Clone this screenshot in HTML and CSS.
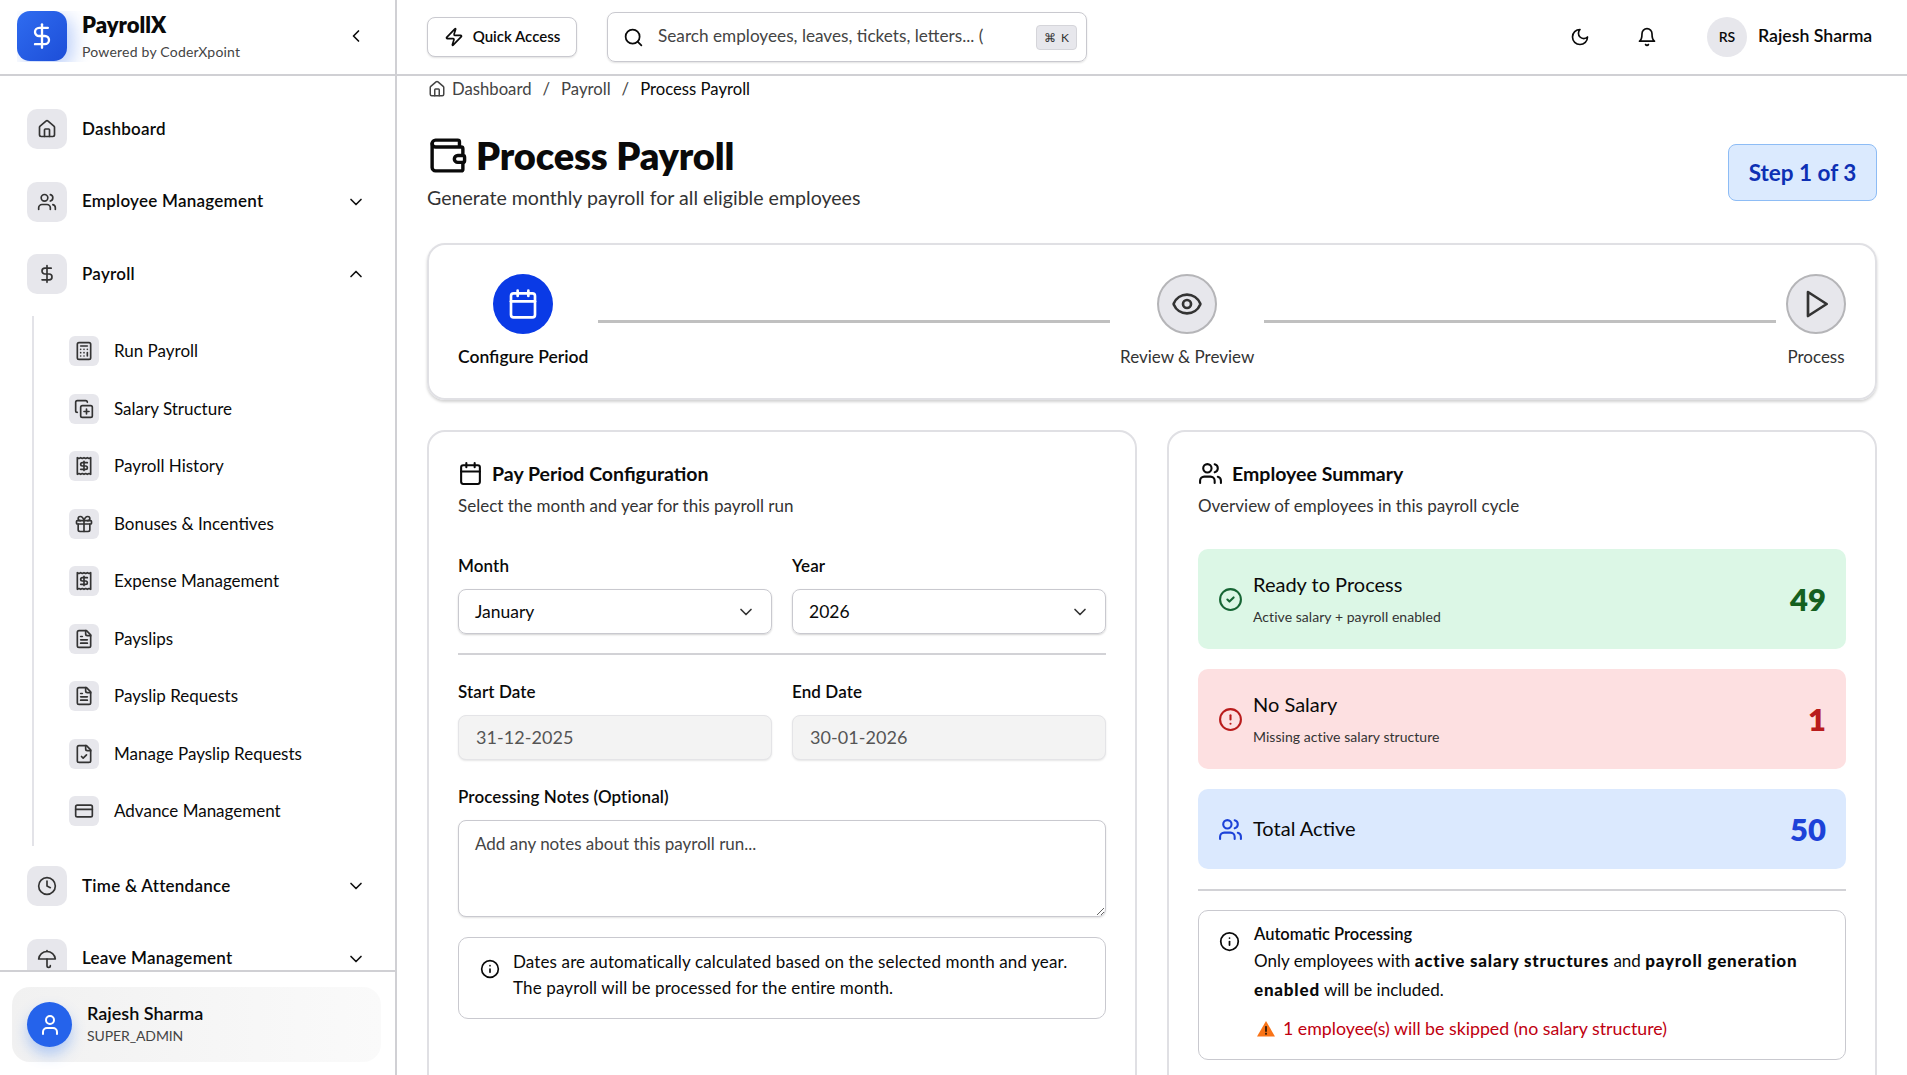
FILE: index.html
```html
<!DOCTYPE html>
<html lang="en">
<head>
<meta charset="utf-8">
<title>Process Payroll</title>
<link rel="stylesheet" href="styles.css">
</head>
<body>
<svg class="sprite" xmlns="http://www.w3.org/2000/svg">
<symbol id="dollar" viewBox="0 0 24 24"><line x1="12" y1="2" x2="12" y2="22"/><path d="M17 5H9.5a3.5 3.5 0 0 0 0 7h5a3.5 3.5 0 0 1 0 7H6"/></symbol>
<symbol id="house" viewBox="0 0 24 24"><path d="M15 21v-8a1 1 0 0 0-1-1h-4a1 1 0 0 0-1 1v8"/><path d="M3 10a2 2 0 0 1 .709-1.528l7-5.999a2 2 0 0 1 2.582 0l7 5.999A2 2 0 0 1 21 10v9a2 2 0 0 1-2 2H5a2 2 0 0 1-2-2z"/></symbol>
<symbol id="users" viewBox="0 0 24 24"><path d="M16 21v-2a4 4 0 0 0-4-4H6a4 4 0 0 0-4 4v2"/><circle cx="9" cy="7" r="4"/><path d="M22 21v-2a4 4 0 0 0-3-3.87"/><path d="M16 3.13a4 4 0 0 1 0 7.75"/></symbol>
<symbol id="calculator" viewBox="0 0 24 24"><rect width="16" height="20" x="4" y="2" rx="2"/><line x1="8" x2="16" y1="6" y2="6"/><line x1="16" x2="16" y1="14" y2="18"/><path d="M16 10h.01"/><path d="M12 10h.01"/><path d="M8 10h.01"/><path d="M12 14h.01"/><path d="M8 14h.01"/><path d="M12 18h.01"/><path d="M8 18h.01"/></symbol>
<symbol id="copyplus" viewBox="0 0 24 24"><line x1="15" x2="15" y1="12" y2="18"/><line x1="12" x2="18" y1="15" y2="15"/><rect width="14" height="14" x="8" y="8" rx="2" ry="2"/><path d="M4 16c-1.1 0-2-.9-2-2V4c0-1.1.9-2 2-2h10c1.1 0 2 .9 2 2"/></symbol>
<symbol id="receipt" viewBox="0 0 24 24"><path d="M4 2v20l2-1 2 1 2-1 2 1 2-1 2 1 2-1 2 1V2l-2 1-2-1-2 1-2-1-2 1-2-1-2 1Z"/><path d="M16 8h-6a2 2 0 1 0 0 4h4a2 2 0 1 1 0 4H8"/><path d="M12 17.5v-11"/></symbol>
<symbol id="gift" viewBox="0 0 24 24"><rect x="3" y="8" width="18" height="4" rx="1"/><path d="M12 8v13"/><path d="M19 12v7a2 2 0 0 1-2 2H7a2 2 0 0 1-2-2v-7"/><path d="M7.5 8a2.5 2.5 0 0 1 0-5A4.8 8 0 0 1 12 8a4.8 8 0 0 1 4.5-5 2.5 2.5 0 0 1 0 5"/></symbol>
<symbol id="filetext" viewBox="0 0 24 24"><path d="M15 2H6a2 2 0 0 0-2 2v16a2 2 0 0 0 2 2h12a2 2 0 0 0 2-2V7Z"/><path d="M14 2v4a2 2 0 0 0 2 2h4"/><path d="M10 9H8"/><path d="M16 13H8"/><path d="M16 17H8"/></symbol>
<symbol id="filecheck" viewBox="0 0 24 24"><path d="M15 2H6a2 2 0 0 0-2 2v16a2 2 0 0 0 2 2h12a2 2 0 0 0 2-2V7Z"/><path d="M14 2v4a2 2 0 0 0 2 2h4"/><path d="m9 15 2 2 4-4"/></symbol>
<symbol id="card" viewBox="0 0 24 24"><rect width="20" height="14" x="2" y="5" rx="2"/><line x1="2" x2="22" y1="10" y2="10"/></symbol>
<symbol id="clock" viewBox="0 0 24 24"><circle cx="12" cy="12" r="10"/><polyline points="12 6 12 12 16 14"/></symbol>
<symbol id="umbrella" viewBox="0 0 24 24"><path d="M22 12a10.06 10.06 1 0 0-20 0Z"/><path d="M12 12v8a2 2 0 0 0 4 0"/><path d="M12 2v1"/></symbol>
<symbol id="down" viewBox="0 0 24 24"><path d="m6 9 6 6 6-6"/></symbol>
<symbol id="up" viewBox="0 0 24 24"><path d="m18 15-6-6-6 6"/></symbol>
<symbol id="left" viewBox="0 0 24 24"><path d="m15 18-6-6 6-6"/></symbol>
<symbol id="user" viewBox="0 0 24 24"><path d="M19 21v-2a4 4 0 0 0-4-4H9a4 4 0 0 0-4 4v2"/><circle cx="12" cy="7" r="4"/></symbol>
<symbol id="zap" viewBox="0 0 24 24"><path d="M4 14a1 1 0 0 1-.78-1.63l9.9-10.2a.5.5 0 0 1 .86.46l-1.92 6.02A1 1 0 0 0 13 10h7a1 1 0 0 1 .78 1.63l-9.9 10.2a.5.5 0 0 1-.86-.46l1.92-6.02A1 1 0 0 0 11 14z"/></symbol>
<symbol id="search" viewBox="0 0 24 24"><circle cx="11" cy="11" r="8"/><path d="m21 21-4.3-4.3"/></symbol>
<symbol id="moon" viewBox="0 0 24 24"><path d="M12 3a6 6 0 0 0 9 9 9 9 0 1 1-9-9Z"/></symbol>
<symbol id="bell" viewBox="0 0 24 24"><path d="M6 8a6 6 0 0 1 12 0c0 7 3 9 3 9H3s3-2 3-9"/><path d="M10.3 21a1.94 1.94 0 0 0 3.4 0"/></symbol>
<symbol id="wallet" viewBox="0 0 24 24"><path d="M19 7V4a1 1 0 0 0-1-1H5a2 2 0 0 0 0 4h15a1 1 0 0 1 1 1v4h-3a2 2 0 0 0 0 4h3a1 1 0 0 0 1-1v-2a1 1 0 0 0-1-1"/><path d="M3 5v14a2 2 0 0 0 2 2h15a1 1 0 0 0 1-1v-4"/></symbol>
<symbol id="calendar" viewBox="0 0 24 24"><path d="M8 2v4"/><path d="M16 2v4"/><rect width="18" height="18" x="3" y="4" rx="2"/><path d="M3 10h18"/></symbol>
<symbol id="eye" viewBox="0 0 24 24"><path d="M2.062 12.348a1 1 0 0 1 0-.696 10.75 10.75 0 0 1 19.876 0 1 1 0 0 1 0 .696 10.75 10.75 0 0 1-19.876 0"/><circle cx="12" cy="12" r="3"/></symbol>
<symbol id="play" viewBox="0 0 24 24"><polygon points="6 3 20 12 6 21 6 3"/></symbol>
<symbol id="check" viewBox="0 0 24 24"><circle cx="12" cy="12" r="10"/><path d="m9 12 2 2 4-4"/></symbol>
<symbol id="alert" viewBox="0 0 24 24"><circle cx="12" cy="12" r="10"/><line x1="12" x2="12" y1="8" y2="12"/><line x1="12" x2="12.01" y1="16" y2="16"/></symbol>
<symbol id="info" viewBox="0 0 24 24"><circle cx="12" cy="12" r="10"/><path d="M12 16v-4"/><path d="M12 8h.01"/></symbol>
</svg>

<div class="app">
  <aside class="sidebar">
    <div class="brand">
      <div class="brand-logo-wrap"><div class="brand-logo"><svg class="ic ic-28"><use href="#dollar"/></svg></div></div>
      <div class="brand-text">
        <div class="brand-name">PayrollX</div>
        <div class="brand-sub">Powered by CoderXpoint</div>
      </div>
      <svg class="ic ic-20 brand-toggle"><use href="#left"/></svg>
    </div>
    <nav class="nav">
      <div class="nav-item"><span class="nav-icon"><svg class="ic ic-20"><use href="#house"/></svg></span><span class="nav-label">Dashboard</span></div>
      <div class="nav-item"><span class="nav-icon"><svg class="ic ic-20"><use href="#users"/></svg></span><span class="nav-label">Employee Management</span><svg class="ic ic-20 nav-chev"><use href="#down"/></svg></div>
      <div class="nav-item nav-item-open"><span class="nav-icon"><svg class="ic ic-20"><use href="#dollar"/></svg></span><span class="nav-label">Payroll</span><svg class="ic ic-20 nav-chev"><use href="#up"/></svg></div>
      <div class="subnav">
        <div class="sub-item"><span class="sub-icon"><svg class="ic ic-20"><use href="#calculator"/></svg></span><span class="sub-label">Run Payroll</span></div>
        <div class="sub-item"><span class="sub-icon"><svg class="ic ic-20"><use href="#copyplus"/></svg></span><span class="sub-label">Salary Structure</span></div>
        <div class="sub-item"><span class="sub-icon"><svg class="ic ic-20"><use href="#receipt"/></svg></span><span class="sub-label">Payroll History</span></div>
        <div class="sub-item"><span class="sub-icon"><svg class="ic ic-20"><use href="#gift"/></svg></span><span class="sub-label">Bonuses &amp; Incentives</span></div>
        <div class="sub-item"><span class="sub-icon"><svg class="ic ic-20"><use href="#receipt"/></svg></span><span class="sub-label">Expense Management</span></div>
        <div class="sub-item"><span class="sub-icon"><svg class="ic ic-20"><use href="#filetext"/></svg></span><span class="sub-label">Payslips</span></div>
        <div class="sub-item"><span class="sub-icon"><svg class="ic ic-20"><use href="#filetext"/></svg></span><span class="sub-label">Payslip Requests</span></div>
        <div class="sub-item"><span class="sub-icon"><svg class="ic ic-20"><use href="#filecheck"/></svg></span><span class="sub-label">Manage Payslip Requests</span></div>
        <div class="sub-item"><span class="sub-icon"><svg class="ic ic-20"><use href="#card"/></svg></span><span class="sub-label">Advance Management</span></div>
      </div>
      <div class="nav-item"><span class="nav-icon"><svg class="ic ic-20"><use href="#clock"/></svg></span><span class="nav-label">Time &amp; Attendance</span><svg class="ic ic-20 nav-chev"><use href="#down"/></svg></div>
      <div class="nav-item"><span class="nav-icon"><svg class="ic ic-20"><use href="#umbrella"/></svg></span><span class="nav-label">Leave Management</span><svg class="ic ic-20 nav-chev"><use href="#down"/></svg></div>
    </nav>
    <div class="side-foot">
      <div class="side-user">
        <div class="side-avatar"><svg class="ic ic-24"><use href="#user"/></svg></div>
        <div>
          <div class="side-name">Rajesh Sharma</div>
          <div class="side-role">SUPER_ADMIN</div>
        </div>
      </div>
    </div>
  </aside>

  <div class="main">
    <header class="topbar">
      <button class="quick"><svg class="ic ic-20"><use href="#zap"/></svg><span class="quick-label">Quick Access</span></button>
      <div class="search">
        <svg class="ic ic-21"><use href="#search"/></svg>
        <span class="search-text">Search employees, leaves, tickets, letters... (</span>
        <kbd class="kbd"><span>⌘</span> <span>K</span></kbd>
      </div>
      <div class="top-right">
        <svg class="ic ic-20 top-moon"><use href="#moon"/></svg>
        <svg class="ic ic-20 top-bell"><use href="#bell"/></svg>
        <span class="top-avatar">RS</span>
        <span class="top-name">Rajesh Sharma</span>
      </div>
    </header>

    <main class="content">
      <div class="crumbs">
        <svg class="ic ic-18"><use href="#house"/></svg>
        <span class="crumb">Dashboard</span><span class="crumb-sep">/</span><span class="crumb">Payroll</span><span class="crumb-sep">/</span><span class="crumb-now">Process Payroll</span>
      </div>

      <div class="page-head">
        <div>
          <h1 class="page-title"><svg class="ic ic-title"><use href="#wallet"/></svg>Process Payroll</h1>
          <p class="page-sub">Generate monthly payroll for all eligible employees</p>
        </div>
        <div class="step-badge">Step 1 of 3</div>
      </div>

      <section class="stepper">
        <div class="step step-on"><span class="step-dot"><svg class="ic ic-32"><use href="#calendar"/></svg></span><span class="step-label">Configure Period</span></div>
        <div class="step-line"></div>
        <div class="step"><span class="step-dot"><svg class="ic ic-32"><use href="#eye"/></svg></span><span class="step-label">Review &amp; Preview</span></div>
        <div class="step-line"></div>
        <div class="step"><span class="step-dot"><svg class="ic ic-32"><use href="#play"/></svg></span><span class="step-label">Process</span></div>
      </section>

      <div class="columns">
        <section class="card">
          <h2 class="card-title"><svg class="ic ic-25"><use href="#calendar"/></svg>Pay Period Configuration</h2>
          <p class="card-sub">Select the month and year for this payroll run</p>
          <div class="form-row">
            <div class="field"><label class="label">Month</label><div class="select"><span>January</span><svg class="ic ic-20"><use href="#down"/></svg></div></div>
            <div class="field"><label class="label">Year</label><div class="select"><span>2026</span><svg class="ic ic-20"><use href="#down"/></svg></div></div>
          </div>
          <hr class="rule">
          <div class="form-row form-row-dates">
            <div class="field"><label class="label">Start Date</label><div class="input-off">31-12-2025</div></div>
            <div class="field"><label class="label">End Date</label><div class="input-off">30-01-2026</div></div>
          </div>
          <label class="label label-notes">Processing Notes (Optional)</label>
          <textarea class="notes" placeholder="Add any notes about this payroll run..."></textarea>
          <div class="note-box">
            <svg class="ic ic-20"><use href="#info"/></svg>
            <p>Dates are automatically calculated based on the selected month and year. The payroll will be processed for the entire month.</p>
          </div>
        </section>

        <section class="card">
          <h2 class="card-title card-title-users"><svg class="ic ic-25"><use href="#users"/></svg>Employee Summary</h2>
          <p class="card-sub">Overview of employees in this payroll cycle</p>
          <div class="stat stat-green">
            <svg class="ic ic-25"><use href="#check"/></svg>
            <div class="stat-body"><div class="stat-name">Ready to Process</div><div class="stat-desc">Active salary + payroll enabled</div></div>
            <div class="stat-num">49</div>
          </div>
          <div class="stat stat-red">
            <svg class="ic ic-25"><use href="#alert"/></svg>
            <div class="stat-body"><div class="stat-name">No Salary</div><div class="stat-desc">Missing active salary structure</div></div>
            <div class="stat-num">1</div>
          </div>
          <div class="stat stat-blue">
            <svg class="ic ic-25"><use href="#users"/></svg>
            <div class="stat-body"><div class="stat-name">Total Active</div></div>
            <div class="stat-num">50</div>
          </div>
          <hr class="rule rule-summary">
          <div class="auto-box">
            <svg class="ic ic-21"><use href="#info"/></svg>
            <div class="auto-body">
              <div class="auto-title">Automatic Processing</div>
              <p class="auto-text">Only employees with <b>active salary structures</b> and <b>payroll generation</b> <b>enabled</b> will be included.</p>
              <p class="auto-warn"><svg class="warn-ic" viewBox="0 0 20 18"><path d="M10 1 19.5 17.5H.5Z" fill="#f97316"/><rect x="9" y="6.5" width="2" height="6" fill="#3b1d0a"/><rect x="9" y="13.5" width="2" height="2" fill="#3b1d0a"/></svg><span>1 employee(s) will be skipped (no salary structure)</span></p>
            </div>
          </div>
        </section>
      </div>
    </main>
  </div>
</div>
</body>
</html>
```
FILE: styles.css
```css
* { box-sizing: border-box; }
html, body { margin: 0; height: 100%; overflow: hidden; }
body { font-family: "Lato", "Noto Sans", sans-serif; color: #0a0a0a; background: #fff; font-size: 16px; }
.sprite { display: none; }
.ic { fill: none; stroke: currentColor; stroke-width: 2; stroke-linecap: round; stroke-linejoin: round; flex: none; display: block; }
.ic-18 { width: 18px; height: 18px; }
.ic-20 { width: 20px; height: 20px; }
.ic-21 { width: 21px; height: 21px; }
.ic-24 { width: 24px; height: 24px; }
.ic-25 { width: 25px; height: 25px; }
.ic-28 { width: 28px; height: 28px; }
.ic-32 { width: 32px; height: 32px; }
.ic-title { width: 41px; height: 41px; }

.app { display: flex; height: 1075px; }

/* Sidebar */
.sidebar { width: 397px; flex: none; border-right: 2px solid #d0d0d4; display: flex; flex-direction: column; height: 100%; }
.brand { height: 76px; flex: none; border-bottom: 2px solid #d0d0d4; display: flex; align-items: flex-start; padding: 11px 29px 0 17px; }
.brand-logo-wrap { height: 51px; width: 73px; flex: none; overflow: hidden; padding-right: 15px; }
.brand-logo { width: 50px; height: 50px; border-radius: 13px; background: linear-gradient(135deg, #2f6cf0, #1d4ed8); color: #fff; display: flex; align-items: center; justify-content: center; box-shadow: 6px 6px 18px rgba(37, 99, 235, .3); }
.brand-text { flex: 1; margin-left: -8px; padding-top: 1px; }
.brand-name { font-size: 22px; font-weight: 800; line-height: 26px; }
.brand-sub { font-size: 14px; letter-spacing: .22px; color: #444; line-height: 18px; margin-top: 5px; }
.brand-toggle { margin-top: 15px; }

.nav { flex: 1; min-height: 0; overflow: hidden; padding: 33px 0 0 27px; }
.nav-item { display: flex; align-items: center; height: 40px; margin-bottom: 32.5px; padding-right: 29px; font-weight: 600; }
.nav-item-open { margin-bottom: 22px; }
.nav-icon { width: 40px; height: 40px; border-radius: 10px; background: #e7e7ec; color: #333; display: flex; align-items: center; justify-content: center; flex: none; margin-right: 15px; }
.nav-label { flex: 1; font-size: 17px; letter-spacing: .25px; padding-bottom: 2px; }
.nav-chev { color: #111; }
.subnav { border-left: 2px solid #e3e3e8; margin: 0 0 20px 5px; padding: 20px 0 0 35px; height: 530px; }
.sub-item { display: flex; align-items: center; height: 30px; margin-bottom: 27.5px; font-size: 17px; }
.sub-label { padding-bottom: 1px; }
.sub-icon { width: 30px; height: 30px; border-radius: 6px; background: #e7e7ec; color: #333; display: flex; align-items: center; justify-content: center; margin-right: 15px; flex: none; }

.side-foot { height: 105px; flex: none; border-top: 2px solid #d0d0d4; padding: 15px 14px 0 12px; background: #fff; }
.side-user { height: 75px; border-radius: 18px; background: linear-gradient(90deg, #f1f1f1, #fafafa); padding: 15px; display: flex; align-items: center; gap: 15px; }
.side-avatar { width: 45px; height: 45px; border-radius: 50%; background: #2563eb; color: #fff; display: flex; align-items: center; justify-content: center; box-shadow: 0 8px 14px rgba(59, 130, 246, .35); flex: none; }
.side-name { font-size: 18px; font-weight: 600; line-height: 24px; margin-top: -3px; }
.side-role { font-size: 14px; letter-spacing: -.1px; color: #444; line-height: 18px; margin-top: 2px; }

/* Main */
.main { flex: 1; min-width: 0; display: flex; flex-direction: column; }
.topbar { height: 76px; flex: none; border-bottom: 2px solid #d0d0d4; display: flex; align-items: center; padding: 0 30px; }
.quick { height: 40px; width: 150px; background: #fff; border: 1px solid #c9c9cf; border-radius: 8px; box-shadow: 0 1px 2px rgba(0,0,0,.12); display: flex; align-items: center; justify-content: center; gap: 9px; font: 600 15px "Lato", sans-serif; color: #0a0a0a; padding: 0; }
.quick-label { padding-bottom: 2px; }
.search { width: 480px; height: 50px; margin-left: 30px; border: 1px solid #c9c9cf; border-radius: 8px; box-shadow: 0 1px 2px rgba(0,0,0,.12); display: flex; align-items: center; padding: 0 9px 0 15px; }
.search-text { flex: 1; margin-left: 14px; font-size: 17.2px; color: #444; padding-bottom: 3px; }
.kbd { width: 41px; height: 25px; background: #e7e7ec; border: 1px solid #d5d5da; border-radius: 4px; display: flex; align-items: center; justify-content: center; gap: 5px; font: 12px "Lato", sans-serif; color: #333; }
.top-right { margin-left: auto; display: flex; align-items: center; }
.top-moon { margin-right: 47px; }
.top-bell { margin-right: 50px; }
.top-avatar { width: 40px; height: 40px; border-radius: 50%; background: #e7e7ec; display: flex; align-items: center; justify-content: center; font-size: 14px; font-weight: 600; margin-right: 11px; padding-bottom: 1px; }
.top-name { font-size: 17.7px; font-weight: 600; width: 119px; white-space: nowrap; padding-bottom: 4px; }

.content { flex: 1; min-height: 0; overflow: hidden; padding: 0 30px; }
.crumbs { display: flex; align-items: center; height: 26px; font-size: 16.7px; color: #444; padding-left: 1px; }
.crumbs .ic { margin-right: 6px; }
.crumb-sep { margin: 0 11px; }
.crumb-now { color: #0a0a0a; }
.page-head { display: flex; justify-content: space-between; align-items: center; height: 141px; padding-bottom: 2px; }
.step-badge { margin-top: 2px; }
.page-title { display: flex; align-items: center; gap: 8px; margin: 0; font-size: 38px; letter-spacing: -.15px; font-weight: 800; line-height: 46px; }
.page-sub { margin: 7px 0 0; font-size: 19.6px; color: #333; line-height: 26px; }
.step-badge { width: 149px; height: 57px; background: #dbeafe; border: 1px solid #8dbcf5; border-radius: 8px; color: #0d30b4; display: flex; align-items: center; justify-content: center; font-size: 22.5px; font-weight: 700; }

.stepper { height: 157px; border: 2px solid #e0e0e4; border-radius: 18px; box-shadow: 0 2px 3px rgba(0,0,0,.18); padding: 29px 29px 0; display: flex; align-items: flex-start; }
.step { display: flex; flex-direction: column; align-items: center; gap: 11px; font-size: 17px; color: #333; }
.step-on { color: #0a0a0a; font-weight: 600; font-size: 17.5px; }
.step-dot { width: 60px; height: 60px; border-radius: 50%; background: #e7e7ec; border: 2px solid #b5b5b8; color: #333; display: flex; align-items: center; justify-content: center; }
.step-on .step-dot { background: #0a3ae6; border: 0; color: #fff; }
.step-label { white-space: nowrap; line-height: 24px; }
.step-line { flex: 1; height: 3px; background: #c0c0c0; margin: 46px 10px 0; }

.columns { display: grid; grid-template-columns: 1fr 1fr; gap: 30px; margin-top: 30px; }
.card { border: 2px solid #e0e0e4; border-radius: 18px; height: 700px; padding: 26px 29px 0; }
.card-title { display: flex; align-items: center; gap: 9px; margin: 0; font-size: 19.5px; font-weight: 700; height: 30px; }
.card-sub { margin: 6px 0 0; font-size: 17px; color: #333; line-height: 24px; }
.form-row { display: grid; grid-template-columns: 1fr 1fr; gap: 20px; margin-top: 36px; }
.form-row-dates { margin-top: 25px; }
.label { display: block; font-size: 17px; letter-spacing: .1px; font-weight: 600; line-height: 24px; margin-bottom: 11px; }
.select { height: 45px; border: 1px solid #c9c9cf; border-radius: 8px; box-shadow: 0 1px 2px rgba(0,0,0,.18); display: flex; align-items: center; justify-content: space-between; padding: 0 15px 0 16px; font-size: 17.5px; }
.select .ic { color: #333; }
.rule { border: 0; border-top: 2px solid #d2d2d6; margin: 19px 0 0; }
.input-off { height: 45px; background: #f3f3f3; border: 1px solid #e4e4e7; border-radius: 8px; box-shadow: 0 1px 2px rgba(0,0,0,.1); display: flex; align-items: center; padding: 0 17px 1px; font-size: 18px; color: #555; letter-spacing: .05px; }
.label-notes { margin-top: 25px; }
.notes { display: block; width: 100%; height: 97px; border: 1px solid #c9c9cf; border-radius: 8px; box-shadow: 0 1px 2px rgba(0,0,0,.12); padding: 11px 16px; font: 17px/24px "Lato", sans-serif; color: #333; outline: 0; }
.notes::placeholder { color: #444; opacity: 1; }
.note-box { margin-top: 20px; height: 82px; border: 1px solid #c9c9cf; border-radius: 10px; padding: 11px 15px 0 21px; display: flex; gap: 13px; }
.note-box .ic { margin-top: 10px; }
.note-box p { margin: 0; font-size: 17px; letter-spacing: .13px; line-height: 25.5px; }

.stat { display: flex; align-items: center; border-radius: 10px; padding: 0 20px; height: 100px; margin-bottom: 20px; }
.card-sub + .stat { margin-top: 31px; }
.stat .ic { margin-right: 10px; }
.stat-body { flex: 1; padding-bottom: 2px; }
.stat-name { font-size: 20px; line-height: 26px; }
.stat-desc { font-size: 14px; letter-spacing: .05px; color: #333; line-height: 18px; margin-top: 11px; }
.stat-num { font-size: 31px; font-weight: 800; }
.stat-green { background: #dcf7e6; }
.stat-green .ic { color: #166534; }
.stat-green .stat-num { color: #14601f; }
.stat-red { background: #fde0e1; }
.stat-red .ic, .stat-red .stat-num { color: #b91c1c; }
.stat-blue { background: #dbe9fe; height: 80px; }
.stat-blue .ic, .stat-blue .stat-num { color: #1d42d8; }
.rule-summary { margin: 0; }
.auto-box { margin-top: 19px; height: 150px; border: 1px solid #c9c9cf; border-radius: 10px; padding: 11px 15px 0 20px; display: flex; gap: 14px; }
.auto-box .ic { margin-top: 9px; }
.auto-body { flex: 1; }
.auto-title { font-size: 16.5px; font-weight: 600; line-height: 24px; }
.auto-text { margin: 0; font-size: 17px; line-height: 29px; }
.auto-text b { font-weight: 900; letter-spacing: .8px; }
.auto-warn { margin: 11px 0 0; display: flex; align-items: center; gap: 7px; font-size: 17.75px; line-height: 26px; color: #c00010; }
.warn-ic { width: 20px; height: 17px; flex: none; margin-left: 2px; }
```
